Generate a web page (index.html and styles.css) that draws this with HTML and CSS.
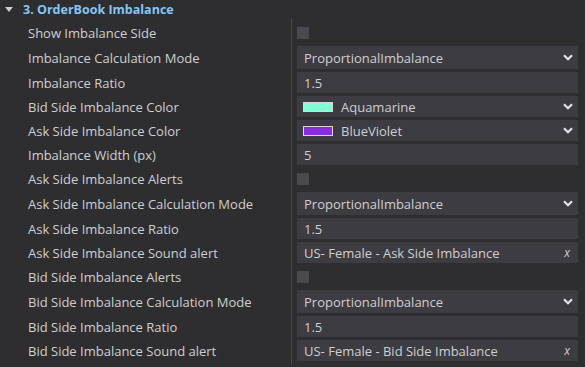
FILE: index.html
```html
<!DOCTYPE html>
<html>
<head>
<meta charset="utf-8">
<link rel="stylesheet" href="styles.css">
</head>
<body>
<div class="panel">
  <div class="header"><span class="tri"></span><span class="title">3. OrderBook Imbalance</span></div>
  <div class="body">
    <div class="labels">
      <div class="lrow">Show Imbalance Side</div>
      <div class="lrow tall">Imbalance Calculation Mode</div>
      <div class="lrow">Imbalance Ratio</div>
      <div class="lrow">Bid Side Imbalance Color</div>
      <div class="lrow">Ask Side Imbalance Color</div>
      <div class="lrow">Imbalance Width (px)</div>
      <div class="lrow">Ask Side Imbalance Alerts</div>
      <div class="lrow tall">Ask Side Imbalance Calculation Mode</div>
      <div class="lrow">Ask Side Imbalance Ratio</div>
      <div class="lrow">Ask Side Imbalance Sound alert</div>
      <div class="lrow">Bid Side Imbalance Alerts</div>
      <div class="lrow tall">Bid Side Imbalance Calculation Mode</div>
      <div class="lrow">Bid Side Imbalance Ratio</div>
      <div class="lrow">Bid Side Imbalance Sound alert</div>
    </div>
    <div class="divider"></div>
    <div class="values">
      <div class="vrow"><span class="check"></span></div>
      <div class="vrow box tall"><span class="txt">ProportionalImbalance</span><svg class="chev" viewBox="0 0 10 7" width="10" height="7"><path d="M1 1.2 L5 5.2 L9 1.2" fill="none" stroke="#e2e2e2" stroke-width="2.2"/></svg></div>
      <div class="vrow box"><span class="txt">1.5</span></div>
      <div class="vrow box"><span class="sw aqua"></span><span class="txt">Aquamarine</span><svg class="chev" viewBox="0 0 10 7" width="10" height="7"><path d="M1 1.2 L5 5.2 L9 1.2" fill="none" stroke="#e2e2e2" stroke-width="2.2"/></svg></div>
      <div class="vrow box"><span class="sw violet"></span><span class="txt">BlueViolet</span><svg class="chev" viewBox="0 0 10 7" width="10" height="7"><path d="M1 1.2 L5 5.2 L9 1.2" fill="none" stroke="#e2e2e2" stroke-width="2.2"/></svg></div>
      <div class="vrow box"><span class="txt">5</span></div>
      <div class="vrow"><span class="check"></span></div>
      <div class="vrow box tall"><span class="txt">ProportionalImbalance</span><svg class="chev" viewBox="0 0 10 7" width="10" height="7"><path d="M1 1.2 L5 5.2 L9 1.2" fill="none" stroke="#e2e2e2" stroke-width="2.2"/></svg></div>
      <div class="vrow box"><span class="txt">1.5</span></div>
      <div class="vrow box"><span class="txt">US- Female - Ask Side Imbalance</span><span class="x">x</span></div>
      <div class="vrow"><span class="check"></span></div>
      <div class="vrow box tall"><span class="txt">ProportionalImbalance</span><svg class="chev" viewBox="0 0 10 7" width="10" height="7"><path d="M1 1.2 L5 5.2 L9 1.2" fill="none" stroke="#e2e2e2" stroke-width="2.2"/></svg></div>
      <div class="vrow box"><span class="txt">1.5</span></div>
      <div class="vrow box"><span class="txt">US- Female - Bid Side Imbalance</span><span class="x">x</span></div>
    </div>
  </div>
</div>
</body>
</html>
```
FILE: styles.css
```css
html, body {
  margin: 0;
  padding: 0;
  background: #2e2e31;
}
body {
  width: 585px;
  height: 367px;
  overflow: hidden;
  font-family: "Open Sans", "Liberation Sans", sans-serif;
  font-size: 13px;
  color: #cfcfd0;
}
.panel {
  display: flex;
  flex-direction: column;
}
.header {
  height: 18px;
  display: flex;
  align-items: center;
  margin-bottom: 4px;
}
.tri {
  width: 0;
  height: 0;
  margin-left: 5px;
  margin-right: 10px;
  border-left: 4px solid transparent;
  border-right: 4px solid transparent;
  border-top: 5px solid #cfcfd0;
}
.title {
  font-weight: 700;
  font-size: 12.5px;
  color: #84c6f2;
}
.body {
  display: flex;
}
.labels {
  width: 263px;
  padding-left: 28px;
}
.lrow {
  height: 21px;
  margin-bottom: 3px;
  display: flex;
  align-items: center;
  white-space: nowrap;
}
.lrow.tall, .vrow.tall {
  height: 23px;
}
.divider {
  width: 1px;
  background: #48474e;
  margin-top: -3px;
  margin-right: 5px;
}
.values {
  width: 281px;
}
.vrow {
  height: 21px;
  margin-bottom: 3px;
  display: flex;
  align-items: center;
  box-sizing: border-box;
}
.box {
  background: #3d3c42;
  padding: 0 5px 0 7px;
}
.txt {
  flex: 1;
  white-space: nowrap;
}
.check {
  width: 12px;
  height: 12px;
  background: #4a4951;
}
.chev {
  flex: none;
}
.sw {
  width: 28px;
  height: 8px;
  border: 1px solid #d8d8d8;
  margin-right: 8px;
  margin-left: -1px;
}
.aqua { background: #7fffd4; }
.violet { background: #8a2be2; }
.x {
  font-style: italic;
  font-size: 12px;
  margin-right: 3px;
}
```
